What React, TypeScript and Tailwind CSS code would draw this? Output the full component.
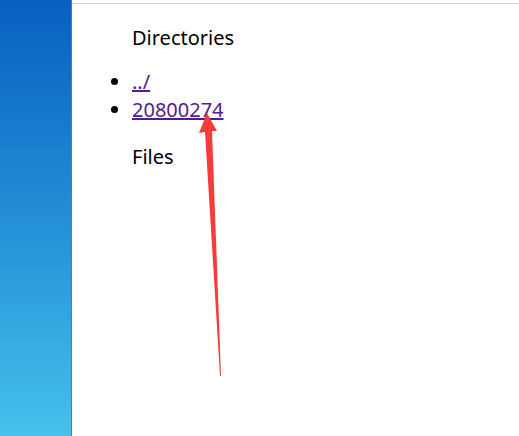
export default function App() {
  return (
    <div className="relative flex h-[436px] w-[519px] overflow-hidden bg-white" style={{ fontFamily: '"Noto Sans", "Open Sans", sans-serif' }}>
      <div className="h-full w-[72px] shrink-0 border-r border-[#3a86b8] bg-gradient-to-b from-[#0a5fc0] via-[#238fd6] to-[#46c0ec]" />
      <div className="flex-1 pt-[3px]">
        <div className="h-full border-t border-[#cfcfcf] pl-[60px] text-[20px] leading-[28px] text-black">
          <div className="pt-[20px]">Directories</div>
          <ul className="mt-[16px] list-outside list-disc pl-0">
            <li><a href="#" className="text-[#551a8b] underline">../</a></li>
            <li><a href="#" className="text-[#551a8b] underline">20800274</a></li>
          </ul>
          <div className="mt-[19px]">Files</div>
        </div>
      </div>
      <svg className="pointer-events-none absolute left-0 top-0" width="519" height="436">
        <polygon points="207,113 217,131 212,131 221,376 220,376 205,132 199,133" fill="#f73b3b" />
      </svg>
    </div>
  )
}
